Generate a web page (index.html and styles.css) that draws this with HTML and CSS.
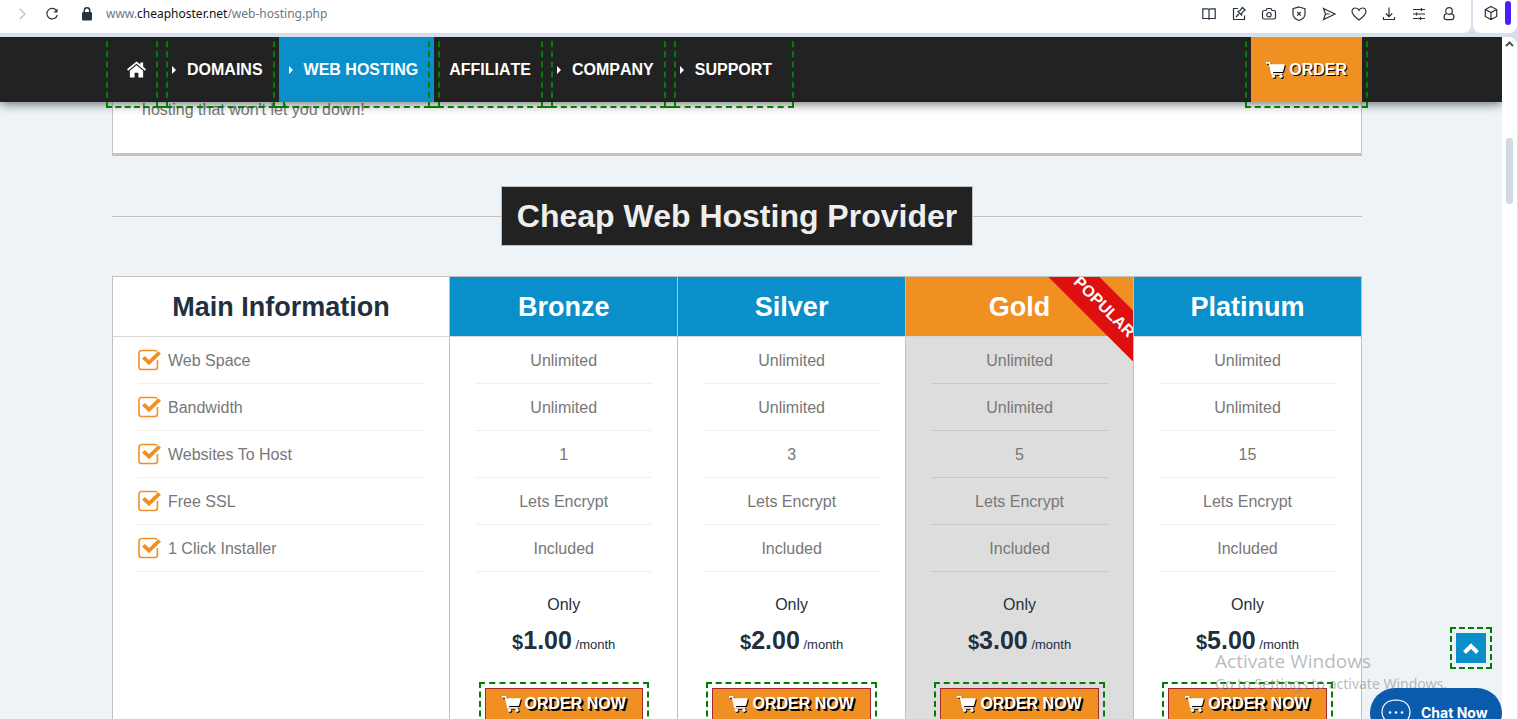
FILE: index.html
```html
<!DOCTYPE html>
<html lang="en">
<head>
<meta charset="utf-8">
<title>Cheap Web Hosting Provider</title>
<link rel="stylesheet" href="styles.css">
</head>
<body>
<svg class="sprite" aria-hidden="true">
  <symbol id="cart" viewBox="0 0 19 16"><path d="M0 0h3.6q.7 0 .9.7l.4 1.500H18q1 0 .8.9l-1.600 6.200q-.2.7-.9.7H7l.3 1.300h8.900v1.500H6.200q-.8 0-1-.8L2.900 1.800H0z"/><circle cx="7.500" cy="14.300" r="1.700"/><circle cx="15" cy="14.300" r="1.700"/></symbol>
  <symbol id="check" viewBox="0 0 24 22"><path d="M19.400 11V18a2.500 2.500 0 0 1-2.500 2.500H3.500A2.500 2.500 0 0 1 1 18V4a2.500 2.500 0 0 1 2.500-2.500h13.400q1.300 0 2 1" fill="none" stroke="#f09022" stroke-width="1.600"/><path d="M4 9.600 7 6.900l4 4L20.200 2.300l2.800 2.500L11 16.300z" fill="#f09022"/></symbol>
</svg>

<header class="browser">
  <div class="toolbar">
    <button class="tool" aria-label="Forward"><svg width="16" height="16" viewBox="0 0 16 16" class="line faint"><path d="m6 3 5 5-5 5"/></svg></button>
    <button class="tool" aria-label="Reload"><svg width="16" height="16" viewBox="0 0 16 16" class="line"><path d="M12.800 5A5.300 5.300 0 1 0 13.300 9"/><path d="M13.500 2.500v4H9.500z" fill="#26323e" stroke="none"/></svg></button>
    <svg class="lock" width="12" height="14" viewBox="0 0 12 14"><rect x="1" y="5" width="10" height="8.500" rx="1.200" fill="#26323e"/><path d="M3.300 6V3.500a2.700 2.700 0 0 1 5.400 0V6" fill="none" stroke="#26323e" stroke-width="1.500"/></svg>
    <span class="url">www.<b>cheaphoster.net</b>/web-hosting.php</span>
    <div class="tools">
      <button class="tool" aria-label="Reader"><svg width="16" height="16" viewBox="0 0 16 16" class="line"><path d="M8 3.500v10M1.800 2.800h4.700Q8 2.800 8 4q0-1.200 1.500-1.200h4.700v9.700H9.500Q8 12.500 8 13.500q0-1-1.500-1H1.800z"/></svg></button>
      <button class="tool" aria-label="Edit and pin"><svg width="16" height="16" viewBox="0 0 16 16" class="line"><path d="M7 2.500H2.500v11h11V9.500M5 11l3-3M7 5.500l3.500 3.500.5-2.500 3-2.500-2.500-2.500L9 4.500z"/></svg></button>
      <button class="tool" aria-label="Snapshot"><svg width="16" height="16" viewBox="0 0 16 16" class="line"><path d="M3 4.500h2L6 2.500h4l1 2h2q1.500 0 1.500 1.500v5.500q0 1.500-1.500 1.500H3q-1.500 0-1.500-1.500V6q0-1.500 1.500-1.500z"/><circle cx="8" cy="8.700" r="2.200"/></svg></button>
      <button class="tool" aria-label="Ad blocker"><svg width="16" height="16" viewBox="0 0 16 16" class="line"><path d="M8 1 14 2.800v5.500q0 4-6 6.200-6-2.200-6-6.200V2.800z"/><path d="m6.200 6 3.600 3.600m0-3.600L6.200 9.600"/></svg></button>
      <button class="tool" aria-label="Send"><svg width="16" height="16" viewBox="0 0 16 16" class="line"><path d="m2.500 2.500 11.500 5.500-11.500 5.500 2-5.500zM4.500 8h4"/></svg></button>
      <button class="tool" aria-label="Favourite"><svg width="16" height="16" viewBox="0 0 16 16" class="line"><path d="M8 14Q1 9 1 5.300 1.200 2 4.500 2 7 2 8 4.300 9 2 11.500 2 14.800 2 15 5.300 15 9 8 14z"/></svg></button>
      <button class="tool" aria-label="Downloads"><svg width="16" height="16" viewBox="0 0 16 16" class="line"><path d="M8 1.500v9M4.800 7.500 8 10.700l3.200-3.200M2.500 11v2.500h11V11"/></svg></button>
      <button class="tool" aria-label="Setup"><svg width="16" height="16" viewBox="0 0 16 16" class="line"><path d="M2 3.500h12M2 8h12M2 12.500h12M10.500 2v3M5.500 6.500v3M9.500 11v3"/></svg></button>
      <button class="tool" aria-label="Profile"><svg width="16" height="16" viewBox="0 0 16 16" class="line"><circle cx="8" cy="5" r="3.300"/><path d="M5.500 7.500Q3 8.500 3 11t2.500 2.700h5Q13 13.500 13 11t-2.500-3.500"/></svg></button>
    </div>
  </div>
  <div class="side-tools">
    <button class="tool" aria-label="Extensions"><svg width="16" height="16" viewBox="0 0 16 16" class="line"><path d="m8 1.500 5.700 3v7L8 14.500l-5.700-3v-7zM2.300 4.500 8 7.500l5.700-3M8 7.500v7"/></svg></button>
    <span class="accent"></span>
  </div>
</header>

<div class="window">
  <main class="page">
    <nav class="nav">
      <a class="nav-link" href="#" aria-label="Home"><svg width="19" height="17" viewBox="0 0 20 17"><path d="M10 0 0 8.300l1.200 1.400L10 2.500l8.800 7.200L20 8.300 17 5.700V1h-3v2.300z" fill="#fff"/><path d="m10 4-7 5.800V17h5v-5h4v5h5V9.800z" fill="#fff"/></svg></a>
      <a class="nav-link sub" href="#">DOMAINS</a>
      <a class="nav-link sub active" href="#">WEB HOSTING</a>
      <a class="nav-link" href="#">AFFILIATE</a>
      <a class="nav-link sub" href="#">COMPANY</a>
      <a class="nav-link sub" href="#">SUPPORT</a>
      <a class="nav-link order" href="#"><svg class="cart" width="19" height="16"><use href="#cart"/></svg>ORDER</a>
    </nav>

    <div class="content">
      <section class="card"><p>hosting that won't let you down!</p></section>
      <div class="title-row"><h2>Cheap Web Hosting Provider</h2></div>

      <table class="plans">
        <colgroup><col class="col-info"><col><col><col><col></colgroup>
        <thead>
          <tr>
            <th class="info">Main Information</th>
            <th>Bronze</th>
            <th>Silver</th>
            <th class="gold">Gold<div class="ribbon-clip"><span class="ribbon">POPULAR</span></div></th>
            <th>Platinum</th>
          </tr>
        </thead>
        <tbody>
          <tr><td class="info"><div class="cell"><svg width="24" height="22"><use href="#check"/></svg>Web Space</div></td><td><div class="cell">Unlimited</div></td><td><div class="cell">Unlimited</div></td><td class="gold"><div class="cell">Unlimited</div></td><td><div class="cell">Unlimited</div></td></tr>
          <tr><td class="info"><div class="cell"><svg width="24" height="22"><use href="#check"/></svg>Bandwidth</div></td><td><div class="cell">Unlimited</div></td><td><div class="cell">Unlimited</div></td><td class="gold"><div class="cell">Unlimited</div></td><td><div class="cell">Unlimited</div></td></tr>
          <tr><td class="info"><div class="cell"><svg width="24" height="22"><use href="#check"/></svg>Websites To Host</div></td><td><div class="cell">1</div></td><td><div class="cell">3</div></td><td class="gold"><div class="cell">5</div></td><td><div class="cell">15</div></td></tr>
          <tr><td class="info"><div class="cell"><svg width="24" height="22"><use href="#check"/></svg>Free SSL</div></td><td><div class="cell">Lets Encrypt</div></td><td><div class="cell">Lets Encrypt</div></td><td class="gold"><div class="cell">Lets Encrypt</div></td><td><div class="cell">Lets Encrypt</div></td></tr>
          <tr><td class="info"><div class="cell"><svg width="24" height="22"><use href="#check"/></svg>1 Click Installer</div></td><td><div class="cell">Included</div></td><td><div class="cell">Included</div></td><td class="gold"><div class="cell">Included</div></td><td><div class="cell">Included</div></td></tr>
          <tr class="prices">
            <td class="info"></td>
            <td><p>Only</p><p class="price"><small>$</small>1.00<span> /month</span></p><a class="buy" href="#"><svg class="cart" width="19" height="16"><use href="#cart"/></svg>ORDER NOW</a></td>
            <td><p>Only</p><p class="price"><small>$</small>2.00<span> /month</span></p><a class="buy" href="#"><svg class="cart" width="19" height="16"><use href="#cart"/></svg>ORDER NOW</a></td>
            <td class="gold"><p>Only</p><p class="price"><small>$</small>3.00<span> /month</span></p><a class="buy" href="#"><svg class="cart" width="19" height="16"><use href="#cart"/></svg>ORDER NOW</a></td>
            <td><p>Only</p><p class="price"><small>$</small>5.00<span> /month</span></p><a class="buy" href="#"><svg class="cart" width="19" height="16"><use href="#cart"/></svg>ORDER NOW</a></td>
          </tr>
        </tbody>
      </table>
    </div>
  </main>
  <div class="scrollbar">
    <svg width="9" height="6" viewBox="0 0 9 6"><path d="m1 5 3.500-3.500L8 5" fill="none" stroke="#4d5358" stroke-width="2"/></svg>
    <span class="thumb"></span>
  </div>
  <div class="watermark"><p class="wm-title">Activate Windows</p><p>Go to Settings to activate Windows.</p></div>
  <a class="to-top" href="#" aria-label="Back to top"><svg width="16" height="11" viewBox="0 0 16 11"><path d="m1.500 9.500 6.500-6.500 6.500 6.500" fill="none" stroke="#fff" stroke-width="4"/></svg></a>
  <button class="chat"><svg width="30" height="28" viewBox="0 0 30 28"><path d="M5.500 22Q1 18.500 1 13.200 1.500 1.500 15 1q13.500.5 14 12.200Q28.500 25 15 25.500q-3 0-5.500-1L4 26z" fill="none" stroke="#fff" stroke-width="1.200"/><g fill="#fff"><circle cx="9" cy="13.500" r="1.300"/><circle cx="15" cy="13.500" r="1.300"/><circle cx="21" cy="13.500" r="1.300"/></g></svg>Chat Now</button>
</div>
</body>
</html>
```
FILE: styles.css
```css
* { box-sizing: border-box; }
body {
  margin: 0;
  height: 100vh;
  display: flex;
  flex-direction: column;
  overflow: hidden;
  background: #d7e0ea;
  font: 16px/24px "Liberation Sans", Arial, sans-serif;
  color: #777;
}
p, h2 { margin: 0; }
a { text-decoration: none; }
.sprite { display: none; }

/* Browser frame */
.browser { display: flex; gap: 2px; height: 33px; margin-bottom: 4px; flex: none; }
.toolbar {
  flex: 1;
  display: flex;
  align-items: center;
  padding: 0 14px 6px;
  background: #fff;
  border-radius: 0 0 8px 0;
}
.tool { display: block; padding: 0; border: 0; background: none; width: 16px; height: 16px; }
.tool svg { display: block; }
.tool + .tool { margin-left: 14px; }
.line { fill: none; stroke: #26323e; stroke-width: 1.2; }
.faint { stroke: #b9bfc4; }
.lock { margin: 0 13px 0 21px; }
.url { font: 12px/20px "Noto Sans", "Open Sans", sans-serif; color: #66788a; }
.url b { font-weight: 400; color: #111; }
.tools { margin-left: auto; display: flex; }
.side-tools {
  width: 44px;
  margin-right: 1px;
  display: flex;
  align-items: center;
  gap: 6px;
  padding: 0 0 7px 10px;
  background: #fff;
  border-radius: 0 0 8px 8px;
}
.accent { width: 6px; height: 24px; border-radius: 3px; background: #4a1fff; }

.window { flex: 1; min-height: 0; display: flex; position: relative; }
.page { flex: 1; overflow: hidden; background: #edf3f7; }
.scrollbar {
  width: 15px;
  margin-right: 1px;
  padding-top: 4px;
  display: flex;
  flex-direction: column;
  align-items: center;
  gap: 91px;
  background: #fff;
  border-radius: 0 8px 0 0;
}
.thumb { width: 7px; height: 66px; border-radius: 3px; background: #d0dae3; }

/* Navigation */
.nav {
  position: relative;
  z-index: 2;
  display: flex;
  height: 65px;
  padding: 0 140px 0 112px;
  background: #222;
  box-shadow: 0 2px 10px rgba(0, 0, 0, .55);
  font-kerning: none;
}
.nav-link {
  position: relative;
  display: flex;
  align-items: center;
  padding: 0 16px 0 15px;
  color: #fff;
  font-weight: 700;
  outline: 2px dashed #008000;
  outline-offset: 4px;
}
.sub { padding-left: 25px; }
.sub::before {
  content: "";
  position: absolute;
  left: 10px;
  border: 4px solid transparent;
  border-left-color: #fff;
  border-right: 0;
}
.active { background: #0a8fca; }
.order {
  margin-left: auto;
  padding: 0 15px;
  gap: 4px;
  background: #f09022;
  text-shadow: 1px 1px #000;
}
.cart { fill: #fff; filter: drop-shadow(1px 1px 0 #000); overflow: visible; flex: none; }

/* Content */
.content { padding: 0 140px 0 112px; }
.card {
  padding: 0 29px 35px;
  background: #fff;
  border: 1px solid #c2c4c6;
  border-width: 0 1px 3px;
  line-height: 16px;
}
.title-row { display: flex; align-items: center; margin: 30px 0; }
.title-row::before, .title-row::after { content: ""; flex: 1; border-top: 1px solid #c0c0c0; }
h2 {
  padding: 10px 15px;
  border: 1px solid #c0c0c0;
  background: #222;
  color: #eee;
  font-size: 32px;
  line-height: 38px;
}

/* Plan table */
.plans {
  width: 100%;
  table-layout: fixed;
  border-spacing: 0;
  border: 1px solid #c0c0c0;
  border-left: 0;
  background: #fff;
  text-align: center;
}
.col-info { width: 27%; }
.plans th, .plans td { padding: 0; border-left: 1px solid #c0c0c0; }
.plans th {
  position: relative;
  height: 60px;
  border-bottom: 1px solid #d5d8da;
  background: #0a8fca;
  color: #fff;
  font-size: 27px;
}
.plans th.info { background: #fff; color: #222f3e; }
.plans th.gold { background: #f09022; }
td.gold { background: #ddd; }
.cell { margin: 0 25px; height: 47px; line-height: 48px; border-bottom: 1px solid #f0f0f0; }
.gold .cell { border-color: #c9c9c9; }
.info .cell { display: flex; gap: 6px; text-align: left; }
.info svg { margin-top: 12px; }
.ribbon-clip {
  position: absolute;
  z-index: 1;
  top: 0;
  right: 0;
  width: 84px;
  height: 84px;
  overflow: hidden;
}
.ribbon {
  position: absolute;
  top: 12px;
  left: -25px;
  width: 160px;
  background: #dd0f0f;
  font-size: 16px;
  line-height: 36px;
  transform: rotate(45deg);
}
.prices td { padding: 21px 0 24px; color: #222f3e; }
.price { margin: 11px 0 31px; font-size: 25px; font-weight: 700; }
.price small { font-size: 20px; }
.price span { font-size: 13px; font-weight: 400; }
.buy {
  display: inline-flex;
  align-items: center;
  gap: 4px;
  padding: 3px 16px;
  border: 1px solid #a52a2a;
  background: #f09022;
  color: #fff;
  font-weight: 700;
  font-kerning: none;
  text-shadow: 1px 1px #000, 2px 2px #000;
  outline: 2px dashed #008000;
  outline-offset: 4px;
}

/* Floating items */
.watermark {
  position: absolute;
  right: 71px;
  bottom: 25px;
  color: rgba(140, 140, 140, .6);
  font: 14px/20px "Noto Sans", "Open Sans", sans-serif;
  white-space: nowrap;
  pointer-events: none;
}
.wm-title { font: 19px/26px "Open Sans", "Noto Sans", sans-serif; }
.to-top {
  position: absolute;
  right: 32px;
  bottom: 56px;
  width: 30px;
  height: 30px;
  display: grid;
  place-items: center;
  background: #0a8fca;
  outline: 2px dashed #008000;
  outline-offset: 4px;
}
.chat {
  position: absolute;
  right: 16px;
  bottom: -19px;
  width: 132px;
  height: 50px;
  display: flex;
  align-items: center;
  gap: 10px;
  padding: 0 11px;
  border: 0;
  border-radius: 25px;
  background: #0a5bab;
  color: #fff;
  font: 700 14px/20px Inter, sans-serif;
  white-space: nowrap;
}
```
